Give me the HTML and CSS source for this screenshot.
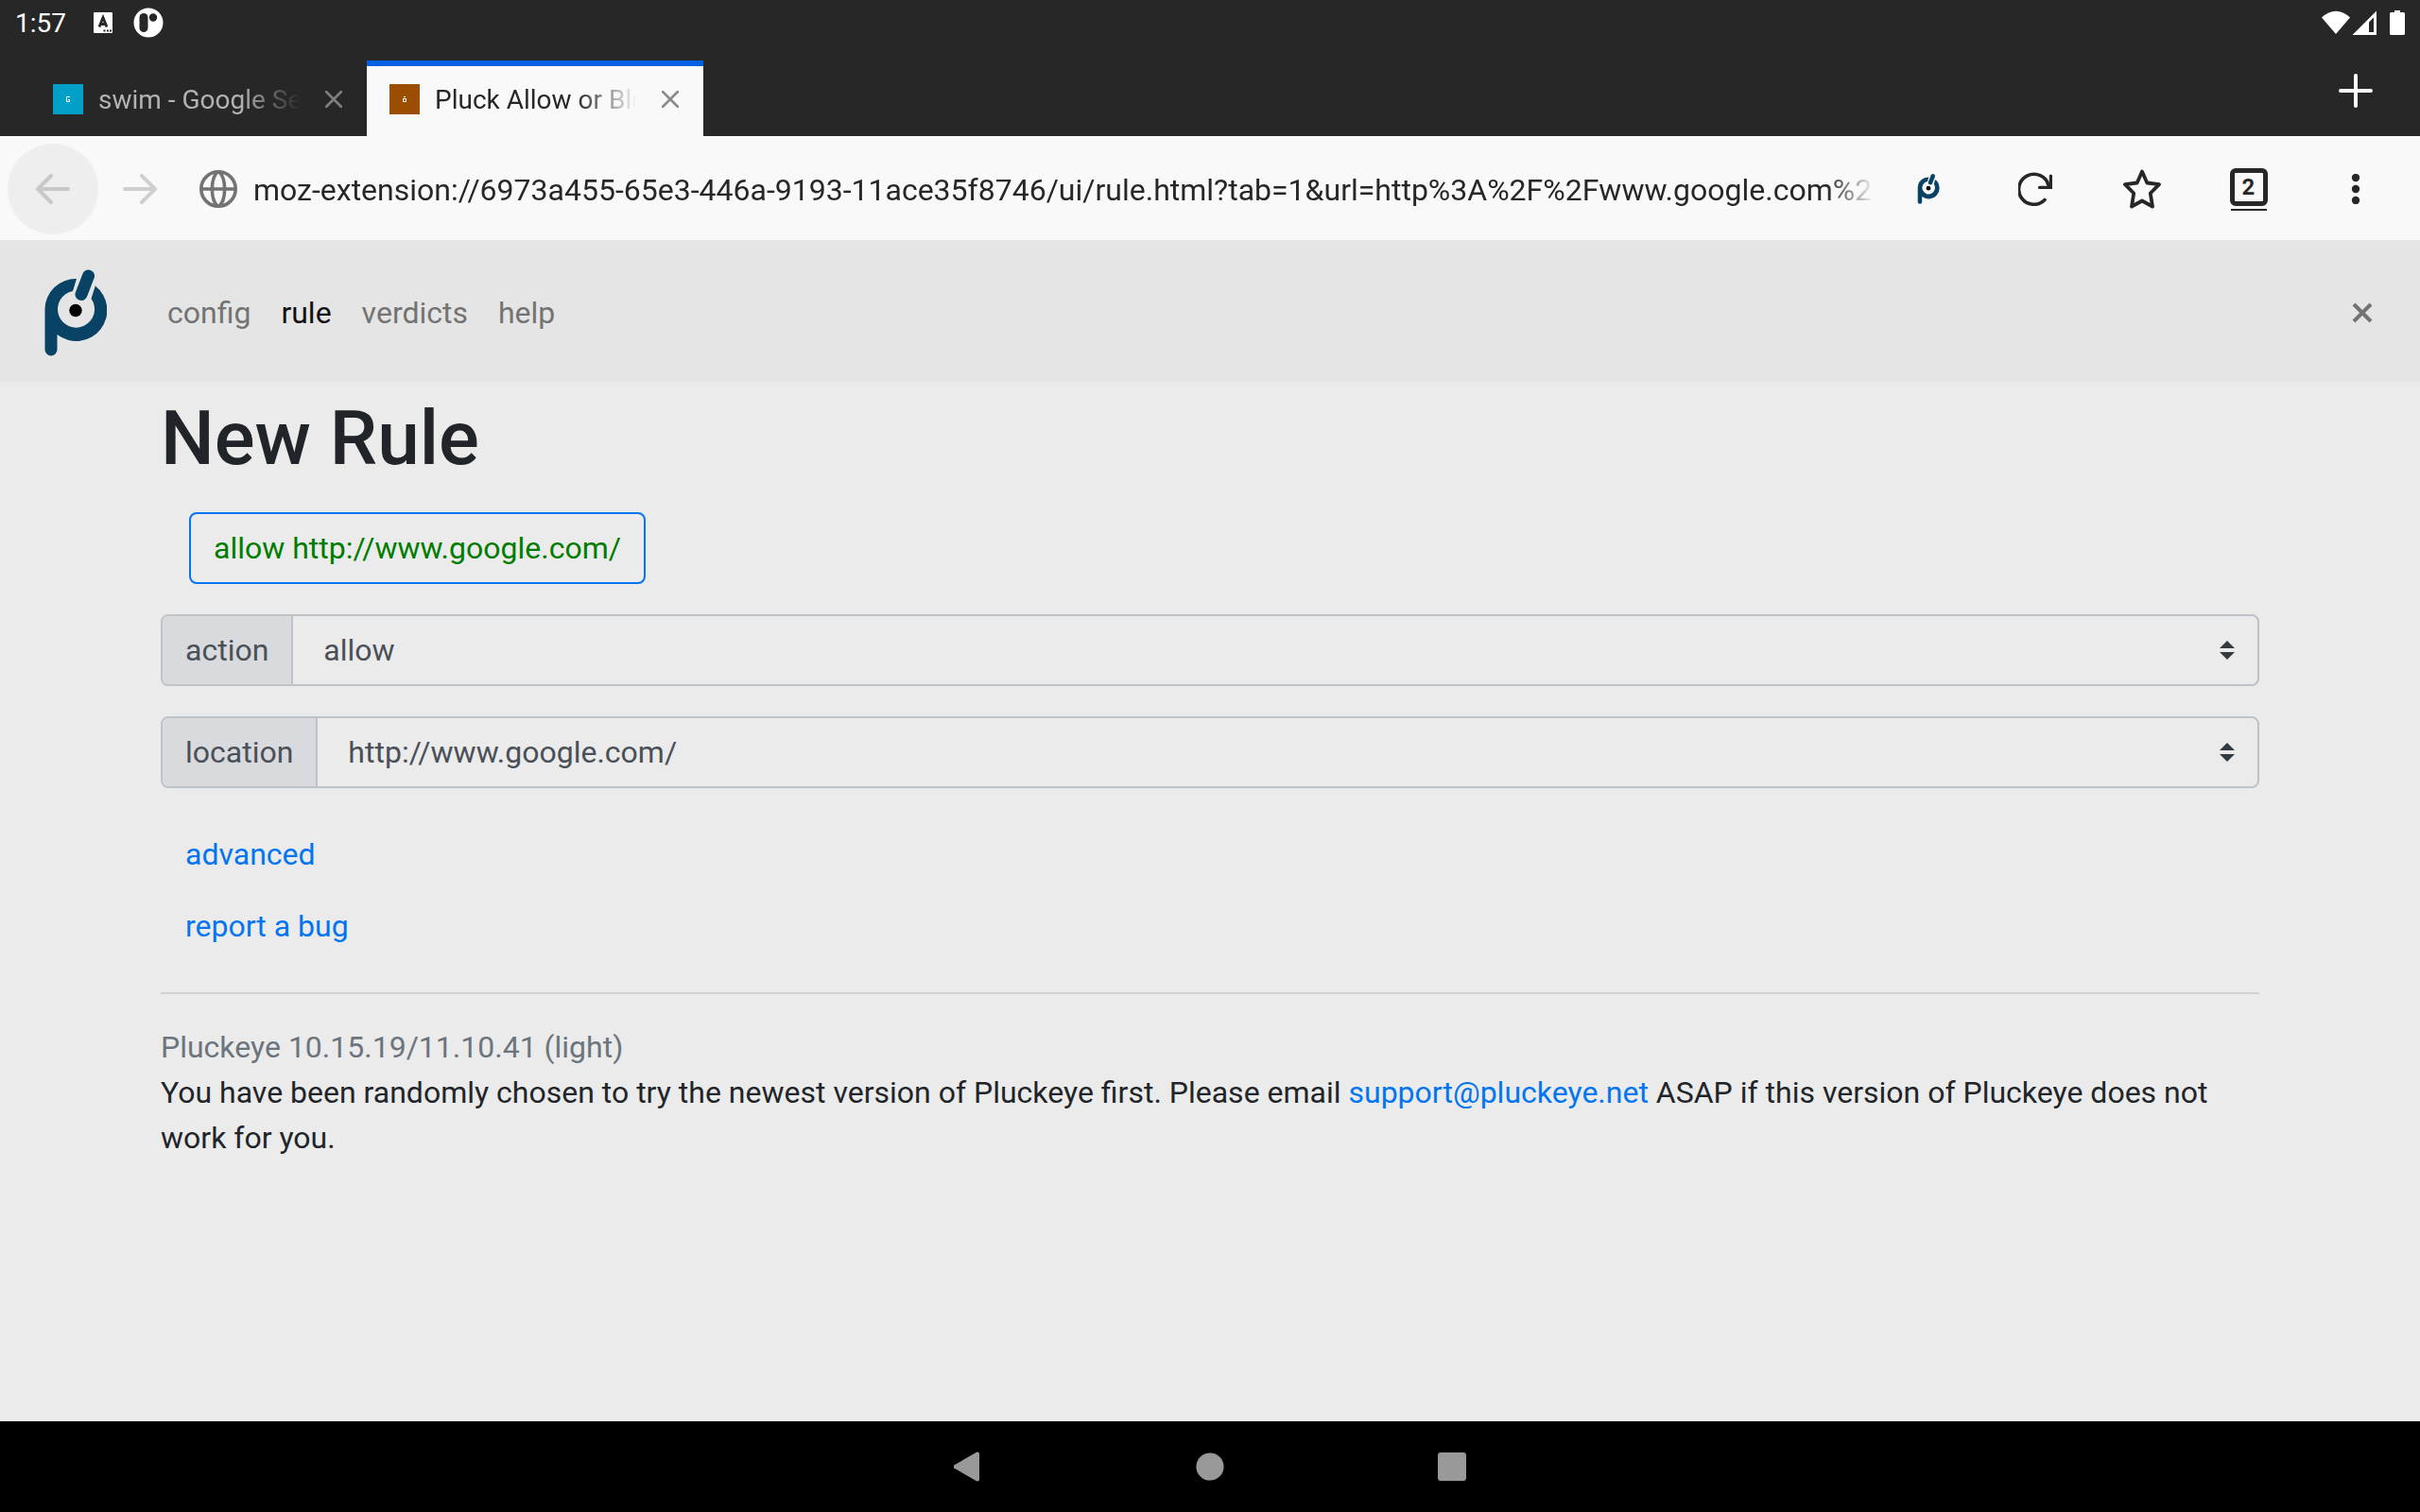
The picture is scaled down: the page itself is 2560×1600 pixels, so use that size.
FILE: index.html
```html
<!DOCTYPE html>
<html lang="en">
<head>
<meta charset="utf-8">
<title>Pluck Allow or Block</title>
<link rel="stylesheet" href="styles.css">
</head>
<body>
<div class="device">
  <div class="status">
    <span class="clock">1:57</span>
    <svg class="status-a" width="20" height="22" viewBox="0 0 20 22"><rect width="20" height="22" rx="1" fill="#fff"/><path d="M6 15.500L10 5.500L14 15.500M7.500 12.500H12.500" fill="none" stroke="#272727" stroke-width="2.800"/><path d="M10.500 18.500h2v2h-2zM14 18.500h2v2h-2zM17 18.500h2v2h-2z" fill="#272727"/></svg>
    <svg class="status-p" width="32" height="32" viewBox="0 0 32 32"><circle cx="16" cy="16" r="15.500" fill="#fff"/><rect x="6.500" y="6" width="9" height="20" rx="4.500" fill="#272727"/><circle cx="21" cy="10.500" r="4.200" fill="#272727"/></svg>
    <svg class="status-right" width="88" height="26" viewBox="0 0 88 26"><path d="M0 7.500Q15-6 30 7.500L15 25z" fill="#fff"/><path fill-rule="evenodd" d="M32.500 26L58 .500V26zM50 12.500V23H55V7.500z" fill="#fff"/><path d="M77 0h6v2h3.500q1.500 0 1.500 1.500V24.500q0 1.500-1.500 1.500h-13q-1.500 0-1.500-1.500V3.500q0-1.500 1.500-1.500H77z" fill="#fff"/></svg>
  </div>
  <div class="tabs">
    <div class="tab">
      <svg width="32" height="32" viewBox="0 0 32 32"><rect width="32" height="32" fill="#00a0c8"/><path d="M18 13.500H14.500V18.500H17.500V16.500H16" fill="none" stroke="#fff"/></svg>
      <span class="tab-title">swim - Google Search</span>
      <button class="icon-button" aria-label="Close swim tab"><svg width="18" height="18" viewBox="0 0 18 18"><path d="M1 1l16 16M17 1L1 17" stroke="#7e7e7e" stroke-width="2.600" stroke-linecap="round"/></svg></button>
    </div>
    <div class="tab tab-active">
      <svg width="32" height="32" viewBox="0 0 32 32"><rect width="32" height="32" fill="#9b4e00"/><path d="M14.500 15.500H17.500V18.500H14.500zM15 13.500h2" fill="none" stroke="#fff"/></svg>
      <span class="tab-title">Pluck Allow or Block</span>
      <button class="icon-button" aria-label="Close Pluck tab"><svg width="18" height="18" viewBox="0 0 18 18"><path d="M1 1l16 16M17 1L1 17" stroke="#8a8a8a" stroke-width="2.600" stroke-linecap="round"/></svg></button>
    </div>
    <button class="icon-button new-tab" aria-label="New tab"><svg width="36" height="36" viewBox="0 0 36 36"><path d="M18 2v32M2 18h32" stroke="#fff" stroke-width="4" stroke-linecap="round"/></svg></button>
  </div>
  <div class="toolbar">
    <button class="icon-button back" aria-label="Back"><svg width="36" height="32" viewBox="0 0 36 32"><path d="M34 16H2M16 2L2 16L16 30" fill="none" stroke="#c8c8c8" stroke-width="4" stroke-linecap="round" stroke-linejoin="round"/></svg></button>
    <button class="icon-button forward" aria-label="Forward"><svg width="36" height="32" viewBox="0 0 36 32"><path d="M2 16H34M20 2L34 16L20 30" fill="none" stroke="#cfcfcf" stroke-width="4" stroke-linecap="round" stroke-linejoin="round"/></svg></button>
    <svg class="globe" width="40" height="40" viewBox="0 0 40 40" fill="none" stroke="#737373"><circle cx="20" cy="20" r="18.200" stroke-width="3.600"/><path d="M2 20H38M19 2C11.500 9 11.500 31 19 38M21 2C28.500 9 28.500 31 21 38" stroke-width="3.600"/></svg>
    <input class="url" aria-label="Address" value="moz-extension://6973a455-65e3-446a-9193-11ace35f8746/ui/rule.html?tab=1&amp;url=http%3A%2F%2Fwww.google.com%2F">
    <div class="actions">
      <button class="icon-button" aria-label="Pluckeye"><svg width="24" height="32" viewBox="0 0 66 92"><use href="#pluck"/></svg></button>
      <button class="icon-button" aria-label="Reload"><svg width="36" height="36" viewBox="0 0 36 36" fill="none" stroke="#272727" stroke-linecap="round"><path d="M28 29.500A16 16 0 1 1 32 14" stroke-width="3.600"/><path d="M34.400 4V16.400H22.500" stroke-width="3.200"/></svg></button>
      <button class="icon-button" aria-label="Bookmark"><svg width="40" height="42" viewBox="0 0 40 42"><path d="M20 2.500L25.300 14.500L38 16.200L28.800 25.500L31 39.500L20 33.500L9 39.500L11.200 25.500L2 16.200L14.700 14.500z" fill="none" stroke="#272727" stroke-width="3.800" stroke-linejoin="round"/></svg></button>
      <button class="icon-button count" aria-label="Tabs"><span class="count-box">2</span></button>
      <button class="icon-button" aria-label="Menu"><svg width="10" height="32" viewBox="0 0 10 32"><g fill="#272727"><circle cx="5" cy="4" r="4.200"/><circle cx="5" cy="16" r="4.200"/><circle cx="5" cy="28" r="4.200"/></g></svg></button>
    </div>
  </div>
  <div class="page">
    <nav class="nav">
      <a class="logo" href="#" aria-label="Pluckeye"><svg width="66" height="92" viewBox="0 0 66 92"><g id="pluck"><path d="M34 10A32.500 32.500 0 0 0 .500 42V85a6.500 6.500 0 0 0 13 0V69A32.500 32.500 0 0 0 53.800 17.500L49.500 31A19.500 19.500 0 1 1 30 23z" fill="#084264"/><path d="M46.500 7L39 26.500" stroke="#084264" stroke-width="13" stroke-linecap="round"/><circle cx="33" cy="43.500" r="6.700"/></g></svg></a>
      <a href="#">config</a><a class="current" href="#">rule</a><a href="#">verdicts</a><a href="#">help</a>
      <button class="icon-button dismiss" aria-label="Close"><svg width="22" height="22" viewBox="0 0 22 22"><path d="M2 2l18 18M20 2L2 20" stroke="#737373" stroke-width="4"/></svg></button>
    </nav>
    <main class="content">
      <h1>New Rule</h1>
      <button class="allow">allow http://www.google.com/</button>
      <div class="group"><label for="action">action</label><select id="action"><option>allow</option></select></div>
      <div class="group"><label for="location">location</label><select id="location"><option>http://www.google.com/</option></select></div>
      <a class="link-row" href="#">advanced</a>
      <a class="link-row" href="#">report a bug</a>
      <hr>
      <p class="version">Pluckeye 10.15.19/11.10.41 (light)</p>
      <p>You have been randomly chosen to try the newest version of Pluckeye first. Please email <a href="mailto:support@pluckeye.net">support@pluckeye.net</a> ASAP if this version of Pluckeye does not work for you.</p>
    </main>
  </div>
  <div class="system">
    <button class="icon-button" aria-label="System back"><svg width="30" height="32" viewBox="0 0 30 32"><path d="M25 2.500V29.500L1.500 16z" fill="#999" stroke="#999" stroke-width="4" stroke-linejoin="round"/></svg></button>
    <button class="icon-button" aria-label="Home"><svg width="30" height="30" viewBox="0 0 30 30"><circle cx="15" cy="15" r="14.600" fill="#999"/></svg></button>
    <button class="icon-button" aria-label="Recents"><svg width="30" height="30" viewBox="0 0 30 30"><rect width="30" height="30" rx="3" fill="#999"/></svg></button>
  </div>
</div>
</body>
</html>
```
FILE: styles.css
```css
* { box-sizing: border-box; }
body { margin: 0; font-family: Roboto, sans-serif; font-size: 32px; line-height: 48px; color: #212529; background: #ebebeb; }
svg { display: block; flex: none; }
button, input, select { font: inherit; }
a { color: #0275f0; text-decoration: none; }
.icon-button { display: flex; align-items: center; justify-content: center; flex: none; padding: 0; border: 0; background: none; }
.device { display: flex; flex-direction: column; min-height: 100vh; }

.status { display: flex; align-items: center; height: 48px; padding: 0 16px; background: #272727; color: #fff; }
.clock { width: 83px; padding-top: 2px; font-size: 28px; }
.status-p { margin-left: 22px; }
.status-right { margin-left: auto; }

.tabs { display: flex; height: 96px; padding: 16px 50px 0 32px; background: #272727; }
.tab { display: flex; align-items: center; width: 356px; padding: 0 26px 4px 24px; border-top: 6px solid transparent; color: #b3b3b3; }
.tab-active { background: #f9f9f9; border-color: #0060df; color: #272727; }
.tab-title { flex: 1; margin: 0 26px 0 16px; padding-top: 2px; overflow: hidden; white-space: nowrap; font-size: 28px; mask-image: linear-gradient(to right, #000 70%, transparent); }
.new-tab { margin: 0 0 16px auto; }

.toolbar { display: flex; align-items: center; height: 110px; padding: 2px 12px 0 8px; background: #f9f9f9; }
.back { width: 96px; height: 96px; border-radius: 50%; background: #eee; }
.forward { margin-left: 26px; }
.globe { margin-left: 45px; }
.url { flex: 1; min-width: 0; height: 72px; margin-left: 17px; padding: 2px 0 0; border: 0; outline: 0; background: none; color: #272727; mask-image: linear-gradient(to left, transparent, #000 50px); }
.actions { display: flex; align-items: center; }
.actions .icon-button { width: 113px; }
.count { flex-direction: column; }
.count::after { content: ""; width: 38px; height: 2px; margin-top: 3px; background: #272727; }
.count-box { width: 40px; height: 40px; border: 5px solid #272727; border-radius: 6px; color: #272727; font-size: 24px; font-weight: 700; line-height: 30px; }

.page { flex: 1; }
.nav { display: flex; align-items: center; gap: 32px; height: 150px; padding: 3px 50px 0 47px; background: #e5e5e5; }
.nav a { color: #737373; }
.nav .current { color: #111; }
.nav .logo { margin-right: 32px; }
.dismiss { margin-left: auto; }

.content { max-width: 2280px; margin: 0 auto; padding: 12px 30px 0; }
h1 { margin: 0 0 30px; font-size: 80px; font-weight: 500; line-height: 96px; }
.allow { display: block; height: 76px; margin: 0 0 32px 30px; padding: 0 24px; border: 2px solid #0275f0; border-radius: 8px; background: none; color: #007c00; }
.group { display: flex; height: 76px; margin-bottom: 32px; border: 2px solid #bdc3c9; border-radius: 8px; overflow: hidden; }
.group label { padding: 12px 24px; border-right: 2px solid #bdc3c9; background: #d9dade; color: #495057; }
.group select { flex: 1; padding: 0 64px 0 32px; border: 0; outline: 0; color: #495057; appearance: none;
  background: url("data:image/svg+xml,%3Csvg xmlns='http://www.w3.org/2000/svg' viewBox='0 0 4 5'%3E%3Cpath fill='%23343a40' d='M2 0L0 2h4zm0 5L0 3h4z'/%3E%3C/svg%3E") no-repeat right 24px center / 16px 20px; }
.link-row { display: block; width: max-content; padding: 14px 26px; }
hr { height: 2px; margin: 32px 0; border: 0; background: #d3d3d3; }
p { margin: 0; }
.version { color: #6c757d; }

.system { display: flex; align-items: center; justify-content: center; gap: 226px; height: 96px; background: #000; }
```
